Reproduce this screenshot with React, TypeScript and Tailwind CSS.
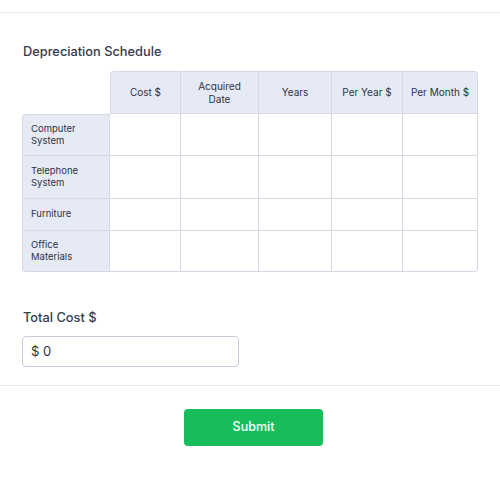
const columns = ['Cost $', 'Acquired Date', 'Years', 'Per Year $', 'Per Month $']
const rows = [
  { label: 'Computer System', h: 'h-[42px]' },
  { label: 'Telephone System', h: 'h-[43px]' },
  { label: 'Furniture', h: 'h-[32px]' },
  { label: 'Office Materials', h: 'h-[41px]' },
]

export default function App() {
  return (
    <div className="min-h-[484px] bg-white text-[#2c3345]" style={{ fontFamily: 'Inter, "Noto Sans", sans-serif' }}>
      <div className="h-[12px]" />
      <div className="border-t border-[#e3e6ee]" />

      <div className="px-[22px] pt-[31px]">
        <h2 className="pl-[1px] text-[12.8px] font-medium leading-[16px] text-[#343b4f]">Depreciation Schedule</h2>

        <div className="mt-[11px] grid grid-cols-[88px_71px_78px_73px_71px_75px]">
          <div className="h-[43px]" />
          {columns.map((c, i) => (
            <div
              key={c}
              className={`flex h-[43px] items-center justify-center whitespace-pre-line border-t border-r border-b border-[#d3d8e4] bg-[#e6eaf5] px-1 text-center text-[10px] leading-[13px] ${
                i === 0 ? 'rounded-tl-[4px] border-l' : ''
              } ${i === columns.length - 1 ? 'rounded-tr-[4px]' : ''}`}
            >
              {c === 'Acquired Date' ? 'Acquired\nDate' : <span className="whitespace-nowrap">{c}</span>}
            </div>
          ))}
          {rows.map((r, ri) => (
            <>
              <div
                key={r.label}
                className={`flex ${r.h} items-center border-r border-b border-l border-[#d3d8e4] bg-[#e6eaf5] pl-[8px] pr-2 text-[9.5px] leading-[12.5px] ${
                  ri === 0 ? 'rounded-tl-[4px] border-t' : ''
                } ${ri === rows.length - 1 ? 'rounded-bl-[4px]' : ''}`}
              >
                <span className="w-[56px]">{r.label}</span>
              </div>
              {columns.map((c, ci) => (
                <div
                  key={r.label + c}
                  className={`${r.h} border-r border-b border-[#d3d8e4] bg-white ${
                    ri === rows.length - 1 && ci === columns.length - 1 ? 'rounded-br-[4px]' : ''
                  }`}
                />
              ))}
            </>
          ))}
        </div>

        <label className="mt-[38px] block pl-[1px] text-[12.8px] font-medium leading-[16px] text-[#343b4f]">Total Cost $</label>
        <div className="mt-[10px] flex h-[31px] w-[217px] items-center rounded-[4px] border border-[#c6cddb] px-[8px] text-[13px]">
          $ 0
        </div>
      </div>

      <div className="mt-[18px] border-t border-[#e3e6ee]" />

      <div className="flex justify-center pt-[23px]">
        <button className="ml-[7px] h-[37px] w-[139px] rounded-[4px] bg-[#18bd5b] text-[12.5px] font-medium text-white">
          Submit
        </button>
      </div>
    </div>
  )
}
